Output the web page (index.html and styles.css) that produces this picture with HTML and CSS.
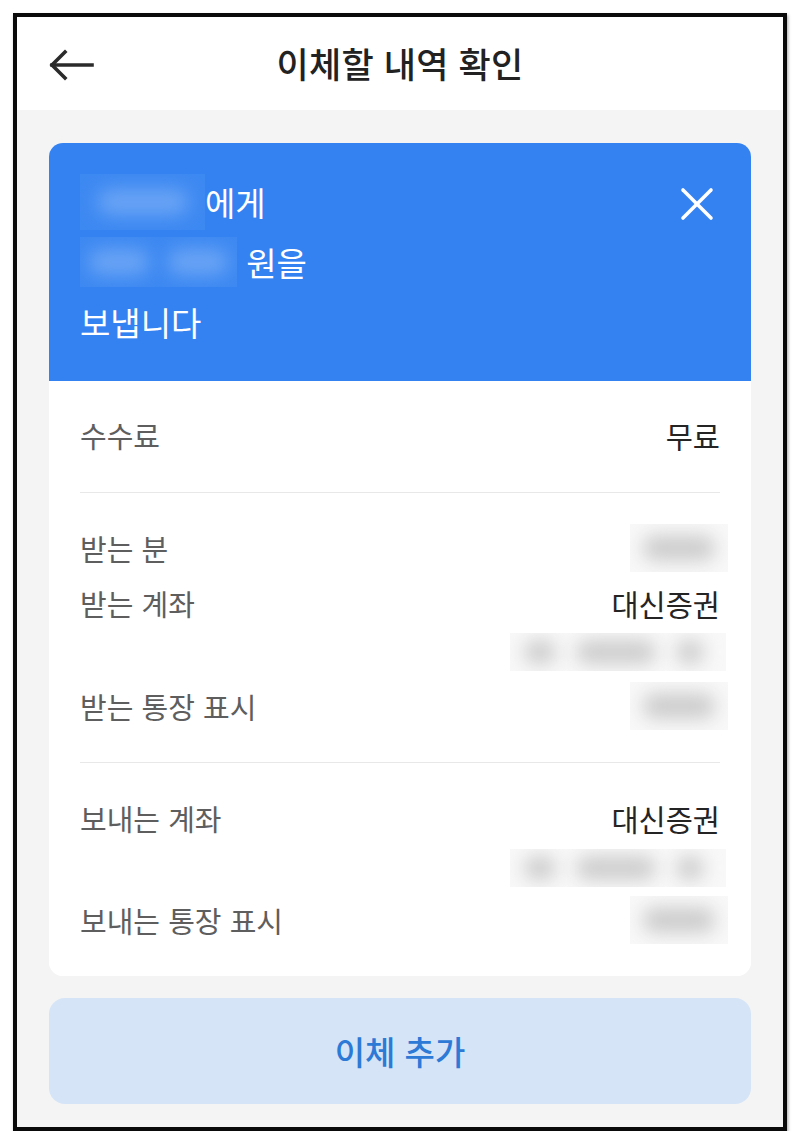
FILE: index.html
```html
<!DOCTYPE html>
<html lang="ko">
<head>
<meta charset="utf-8">
<title>이체할 내역 확인</title>
<link rel="stylesheet" href="styles.css">
</head>
<body>
<div class="frame">
  <header class="topbar">
    <span class="back">
      <svg width="46" height="32" viewBox="0 0 46 32" fill="none" stroke="#2b2b2b" stroke-width="3.6" stroke-linecap="square">
        <path d="M4 16 H44"/>
        <path d="M17 3 L4 16 L17 29" stroke-linejoin="miter"/>
      </svg>
    </span>
    <h1 class="title">이체할 내역 확인</h1>
    <span></span>
  </header>
  <main class="content">
    <section class="card">
      <div class="hero">
        <div class="hero-text">
          <div class="hero-line"><span class="hblur hb1"><i></i></span>에게</div>
          <div class="hero-line"><span class="hblur hb2"><i></i><i></i></span> 원을</div>
          <div class="hero-line">보냅니다</div>
        </div>
        <span class="close">
          <svg width="34" height="34" viewBox="0 0 34 34" fill="none" stroke="#ffffff" stroke-width="3.6" stroke-linecap="round">
            <path d="M3 3 L31 31"/>
            <path d="M31 3 L3 31"/>
          </svg>
        </span>
      </div>
      <div class="details">
        <div class="section s1">
          <div class="row"><span class="label">수수료</span><span class="value">무료</span></div>
        </div>
        <div class="section s2">
          <div class="row"><span class="label">받는 분</span><span class="vblur name"><i></i></span></div>
          <div class="row">
            <span class="label">받는 계좌</span>
            <div class="vstack">
              <span class="value">대신증권</span>
              <span class="vblur acct"><i class="a1"></i><i class="a2"></i><i class="a3"></i></span>
            </div>
          </div>
          <div class="row"><span class="label">받는 통장 표시</span><span class="vblur name"><i></i></span></div>
        </div>
        <div class="section s3">
          <div class="row">
            <span class="label">보내는 계좌</span>
            <div class="vstack tight">
              <span class="value">대신증권</span>
              <span class="vblur acct"><i class="a1"></i><i class="a2"></i><i class="a3"></i></span>
            </div>
          </div>
          <div class="row"><span class="label">보내는 통장 표시</span><span class="vblur name"><i></i></span></div>
        </div>
      </div>
    </section>
    <button class="add-btn" type="button">이체 추가</button>
  </main>
</div>
</body>
</html>
```
FILE: styles.css
```css
* { box-sizing: border-box; }

html, body {
  margin: 0;
  padding: 0;
  background: #ffffff;
}

body {
  font-family: "Noto Sans CJK KR", "Noto Sans", sans-serif;
  padding: 13px 13px 0 13px;
}

.frame {
  width: 774px;
  height: 1118px;
  border: 4px solid #0a0a0a;
  box-shadow: 1px 2px 3px rgba(0, 0, 0, 0.35);
  display: flex;
  flex-direction: column;
  background: #f4f4f4;
  overflow: hidden;
}

.topbar {
  height: 93px;
  background: #ffffff;
  display: grid;
  grid-template-columns: 1fr auto 1fr;
  align-items: center;
  padding: 0 31px;
  flex: none;
}

.back {
  display: flex;
  align-items: center;
  padding-top: 2px;
}

.title {
  margin: 0;
  font-size: 35px;
  font-weight: 500;
  color: #222222;
  letter-spacing: 0.2px;
  line-height: 1;
  padding-bottom: 3px;
}

.content {
  flex: 1;
  padding: 33px 32px 23px;
  display: flex;
  flex-direction: column;
}

.card {
  border-radius: 14px;
  overflow: hidden;
  background: #ffffff;
}

.hero {
  height: 238px;
  background: #3482f2;
  display: flex;
  justify-content: space-between;
  padding: 29px 37px 0 31px;
  color: #ffffff;
}

.hero-line {
  height: 60px;
  line-height: 60px;
  font-size: 33px;
  font-weight: 400;
  display: flex;
  align-items: center;
  white-space: pre;
}

.hblur {
  display: inline-flex;
  align-items: center;
  justify-content: space-around;
  background: #3d89f2;
  height: 52px;
  overflow: hidden;
}

.hblur i {
  display: block;
  width: 60px;
  height: 26px;
  border-radius: 12px;
  background: #6aa4f5;
  filter: blur(9px);
}

.hb1 { width: 125px; height: 56px; }
.hb1 i { width: 90px; }
.hb2 { width: 157px; height: 50px; }

.close {
  margin-top: 15px;
  display: block;
  height: 34px;
}

.details {
  background: #ffffff;
  padding: 0 31px;
}

.section {
  display: flex;
  flex-direction: column;
}

.section + .section {
  border-top: 1px solid #e8e8e8;
}

.s1 { padding: 35px 0 38px; }
.s2 { padding: 36px 0 37px; gap: 17px; }
.s2 .row + .row + .row { margin-top: -1px; }
.s3 { padding: 36px 0 37px; gap: 14px; }

.row {
  display: flex;
  justify-content: space-between;
  align-items: flex-start;
}

.label,
.value {
  height: 38px;
  line-height: 38px;
  font-size: 29px;
}

.label { color: #5e5e5e; }
.value { color: #242424; font-size: 29.5px; }

.vstack {
  display: flex;
  flex-direction: column;
  align-items: flex-end;
  gap: 11px;
}

.vstack.tight { gap: 12px; }

.vblur {
  display: flex;
  align-items: center;
  justify-content: center;
  background: #f8f8f8;
  overflow: hidden;
  margin-right: -8px;
}

.vblur i {
  display: block;
  background: #cdcdcd;
  filter: blur(9px);
  border-radius: 12px;
}

.vblur.name {
  width: 98px;
  height: 48px;
  margin-top: -5px;
  margin-bottom: -5px;
}

.vblur.name i {
  width: 72px;
  height: 26px;
}

.vblur.acct {
  width: 216px;
  height: 38px;
  gap: 20px;
  justify-content: flex-start;
  padding-left: 14px;
  margin-right: -6px;
}

.vblur.acct .a1 { width: 32px; height: 24px; }
.vblur.acct .a2 { width: 80px; height: 24px; }
.vblur.acct .a3 { width: 28px; height: 24px; }

.add-btn {
  margin-top: 22px;
  height: 106px;
  border: none;
  border-radius: 16px;
  background: #d5e4f7;
  color: #2d79d6;
  font-family: "Noto Sans CJK KR", "Noto Sans", sans-serif;
  font-size: 33px;
  font-weight: 500;
  width: 100%;
  padding: 0;
}
```
